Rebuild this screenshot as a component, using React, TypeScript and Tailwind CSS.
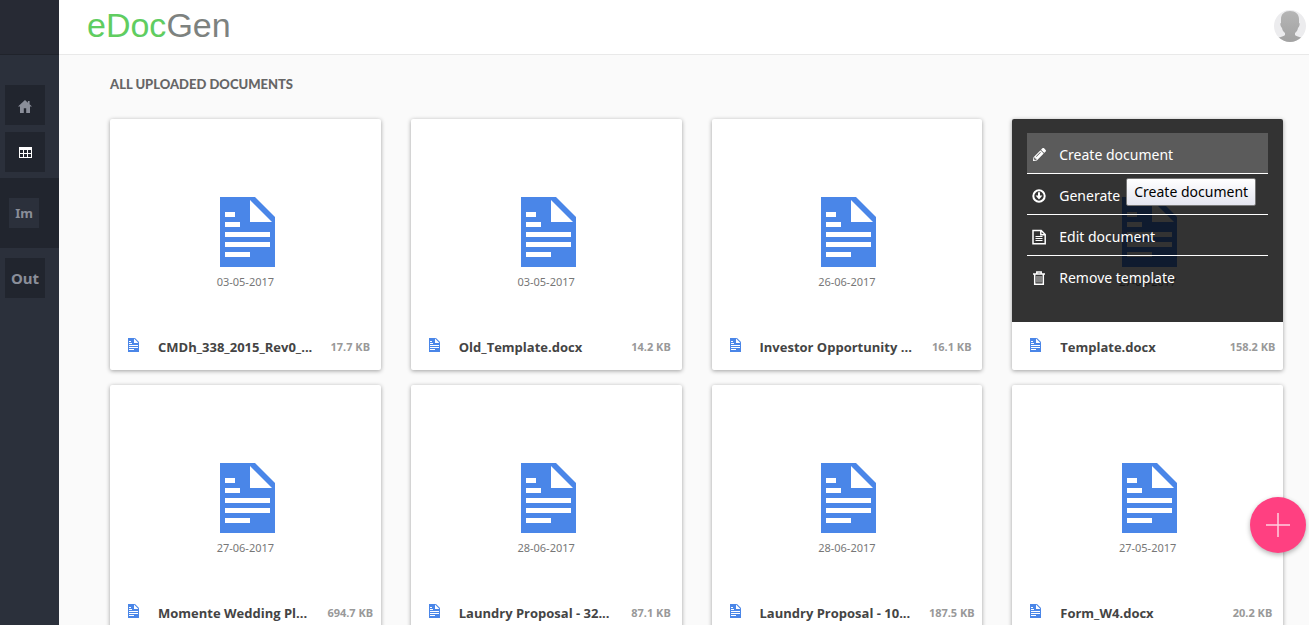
import { FaPencilAlt } from "react-icons/fa";

const documents = [
  { name: "CMDh_338_2015_Rev0_...", date: "03-05-2017", size: "17.7 KB" },
  { name: "Old_Template.docx", date: "03-05-2017", size: "14.2 KB" },
  { name: "Investor Opportunity ...", date: "26-06-2017", size: "16.1 KB" },
  { name: "Template.docx", date: "27-06-2017", size: "158.2 KB", open: true },
  { name: "Momente Wedding Pl...", date: "27-06-2017", size: "694.7 KB" },
  { name: "Laundry Proposal - 32...", date: "28-06-2017", size: "87.1 KB" },
  { name: "Laundry Proposal - 10...", date: "28-06-2017", size: "187.5 KB" },
  { name: "Form_W4.docx", date: "27-05-2017", size: "20.2 KB" },
];

const FileIcon = (props: any) => (
  <svg viewBox="0 0 55 70" fill="#4a86e8" fillRule="evenodd" aria-hidden="true" {...props}>
    <path d="M0 0H35L55 20V70H0ZM30 3V25H52ZM5 15V20H15V15ZM5 25V30H20V25ZM5 35V40H50V35ZM5 45V50H50V45ZM5 55V60H30V55Z" />
  </svg>
);

const PencilIcon = () => <FaPencilAlt size={13} aria-hidden="true" />;

const DownIcon = () => (
  <svg viewBox="0 0 14 14" className="w-[14px] h-[14px]" fill="none" stroke="currentColor" aria-hidden="true">
    <circle cx="7" cy="7" r="5.7" strokeWidth="2" />
    <path d="M6 3.2h2v3.3h2.4L7 10.6 3.6 6.5H6z" fill="currentColor" stroke="none" />
  </svg>
);

const EditIcon = () => (
  <svg viewBox="0 0 14 16" className="w-[14px] h-4" fill="none" stroke="currentColor" aria-hidden="true">
    <path d="M1 1.5h8.200l4 4v9.200H1zM8.800 1.500v4.300h4.400" strokeWidth="1.5" />
    <path d="M3.500 7.500h7M3.500 9.500h7M3.500 11.500h7" strokeWidth="1.2" />
  </svg>
);

const TrashIcon = () => (
  <svg viewBox="0 0 12 14" className="w-3 h-[14px]" fill="none" stroke="currentColor" aria-hidden="true">
    <path d="M0 3h12M3.800 3V1h4.400v2M1.700 3v10.200h8.600V3" strokeWidth="1.5" />
    <path d="M4 5v6.500M6 5v6.500M8 5v6.500" strokeWidth="0.8" />
  </svg>
);

const actions = [
  { label: "Create document", icon: <PencilIcon />, active: true },
  { label: "Generate", icon: <DownIcon /> },
  { label: "Edit document", icon: <EditIcon /> },
  { label: "Remove template", icon: <TrashIcon /> },
];

const CardMenu = () => (
  <div className="absolute inset-0 rounded-t-xs bg-black/80 px-[15px] pt-[14px] text-sm text-white">
    <ul>
      {actions.map((action) => (
        <li key={action.label} className="border-b border-white last:border-0">
          <button
            type="button"
            className={
              action.active
                ? "flex h-10 w-full items-center bg-white/20 pt-[3px]"
                : "flex h-10 w-full items-center pt-[3px]"
            }
          >
            <span className="flex w-6 justify-center">{action.icon}</span>
            <span className="pl-2">{action.label}</span>
          </button>
        </li>
      ))}
    </ul>
    <div
      role="tooltip"
      className="absolute left-[114px] top-[59px] whitespace-nowrap rounded-xs border border-[#767676] bg-linear-to-b from-white to-[#e4e5f0] px-[7px] leading-[26px] text-black"
    >
      Create document
    </div>
  </div>
);

const DocumentCard = (props: any) => {
  const { name, date, size, open } = props;

  return (
    <article className="rounded-xs bg-white shadow-[0_1px_4px_rgba(0,0,0,0.37)]">
      <div className="relative flex h-[203px] flex-col items-center pt-[78px]">
        <FileIcon className="ml-1 h-[70px] w-[55px]" />
        <time className="mt-[7px] text-[11px] leading-4 text-[#777]">{date}</time>
        {open && <CardMenu />}
      </div>
      <div className="grid h-12 grid-cols-[48px_1fr_61px] items-center pt-[2px]">
        <FileIcon className="mb-1 ml-[18px] h-[14px] w-[11px]" />
        <h2 className="truncate pt-px font-['Open_Sans',sans-serif] text-[13px] font-bold text-[#444]">{name}</h2>
        <span className="text-center text-[11px] font-bold text-[#999]">{size}</span>
      </div>
    </article>
  );
};

const Sidebar = () => (
  <nav className="flex w-[59px] shrink-0 flex-col bg-[#2b303b] font-bold text-[#8a8e99]">
    <div className="h-[55px] border-b border-[#20232b] bg-[#272a34]" />
    <a href="#home" aria-label="Home" className="ml-[5px] mt-[30px] flex h-10 w-10 items-center justify-center bg-[#21252e] pt-[3px]">
      <svg viewBox="0 0 14 13" className="h-[13px] w-[14px]" fill="currentColor" aria-hidden="true">
        <path d="M7 0 0 6.600h2V13h3.800V8.200h2.400V13H12V6.600h2L11.600 4.300V.9H9.900v1.800z" />
      </svg>
    </a>
    <a href="#tables" aria-label="Tables" className="ml-[5px] mt-[7px] flex h-10 w-10 items-center justify-center bg-[#21252e] text-white">
      <svg viewBox="0 0 13 11" className="h-[11px] w-[13px]" fill="currentColor" fillRule="evenodd" shapeRendering="crispEdges" aria-hidden="true">
        <path d="M0 0H13V11H0ZM1 3V6H4V3ZM5 3V6H8V3ZM9 3V6H12V3ZM1 7V10H4V7ZM5 7V10H8V7ZM9 7V10H12V7Z" />
      </svg>
    </a>
    <div className="mt-[6px] flex h-[70px] items-center bg-[#21252e] pl-[9px]">
      <a href="#import" className="flex h-[30px] w-[30px] items-center justify-center bg-[#2b303b] pt-[2px] text-[13px]">
        Im
      </a>
    </div>
    <a href="#output" className="ml-[5px] mt-[10px] flex h-10 w-10 items-center justify-center bg-[#21252e] text-[15px]">
      Out
    </a>
  </nav>
);

const Header = () => (
  <header className="flex h-[55px] items-center justify-between border-b border-[#e9e9e9] bg-white pl-7 pr-[3px]">
    <a href="#home" className="pb-1 font-['Liberation_Sans'] text-[34px] leading-10 text-[#7d827f]">
      <span className="text-[#60cd60]">eDoc</span>Gen
    </a>
    <button type="button" aria-label="Account" className="pb-[2px]">
      <svg viewBox="0 0 32 32" className="h-8 w-8" aria-hidden="true">
        <clipPath id="avatar">
          <circle cx="16" cy="16" r="16" />
        </clipPath>
        <linearGradient id="person" x2="0" y2="1">
          <stop stopColor="#b5b5b5" />
          <stop offset="1" stopColor="#a2a2a2" />
        </linearGradient>
        <g clipPath="url(#avatar)">
          <path d="M0 0h32v32H0z" fill="#ececee" />
          <path
            d="M16 1c5.500 0 9 3 9 8v4c1 0 1 3-1 5-.5 3-2 4-3 5v2c2 2 8 2 10 5v3H1v-3c2-3 8-3 10-5v-2c-1-1-2.500-2-3-5-2-2-2-5-1-5V9c0-5 3.500-8 9-8z"
            fill="url(#person)"
          />
        </g>
      </svg>
    </button>
  </header>
);

export default function App() {
  return (
    <div className="flex h-screen overflow-hidden bg-[#fafafa] font-['Noto_Sans',sans-serif]">
      <Sidebar />
      <div className="min-w-0 flex-1">
        <Header />
        <main className="pl-[51px] pr-[26px] pt-5">
          <h1 className="font-['Lato',sans-serif] text-[13px] font-black leading-[18px] text-[#666]">
            ALL UPLOADED DOCUMENTS
          </h1>
          <div className="mt-[26px] grid grid-cols-4 gap-x-[30px] gap-y-[15px]">
            {documents.map((document) => (
              <DocumentCard key={document.name} {...document} />
            ))}
          </div>
        </main>
      </div>
      <button
        type="button"
        aria-label="Add document"
        className="fixed bottom-[72px] right-[3px] flex h-14 w-14 items-center justify-center rounded-full bg-[#ff4081] shadow-[0_2px_5px_rgba(0,0,0,0.3)]"
      >
        <svg viewBox="0 0 24 24" className="h-6 w-6" stroke="#ffd0e0" strokeWidth="1.5" aria-hidden="true">
          <path d="M12 0v24M0 12h24" />
        </svg>
      </button>
    </div>
  );
}
